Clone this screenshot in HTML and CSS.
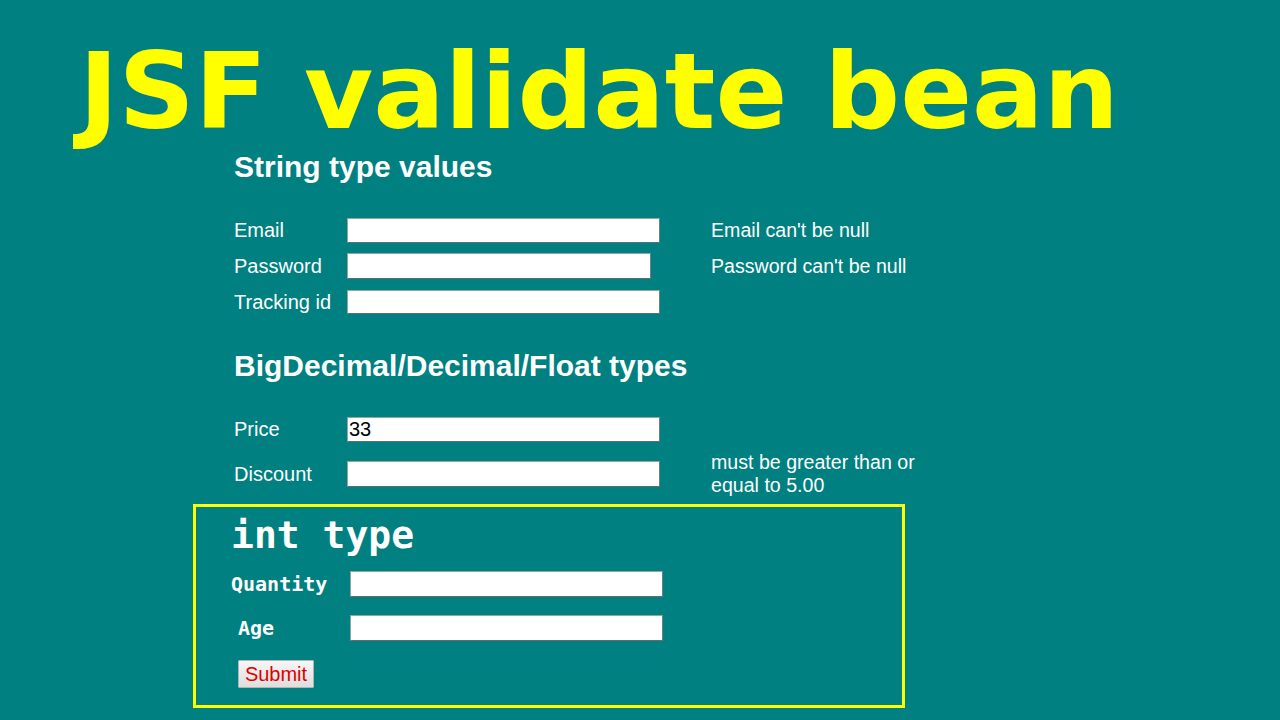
FILE: index.html
```html
<!DOCTYPE html>
<html>
<head>
<meta charset="utf-8">
<link rel="stylesheet" href="styles.css">
</head>
<body>
<h1 class="title">JSF validate bean</h1>
<div class="content">
  <h2 class="heading heading-first">String type values</h2>
  <div class="row">
    <span class="label">Email</span>
    <input class="field" type="text">
    <span class="error">Email can't be null</span>
  </div>
  <div class="row">
    <span class="label">Password</span>
    <input class="field field-short" type="password">
    <span class="error error-shift">Password can't be null</span>
  </div>
  <div class="row row-clip">
    <span class="label">Tracking id</span>
    <input class="field field-thin" type="text">
  </div>

  <h2 class="heading heading-second">BigDecimal/Decimal/Float types</h2>
  <div class="row">
    <span class="label">Price</span>
    <input class="field" type="text" value="33">
  </div>
  <div class="row row-discount">
    <span class="label">Discount</span>
    <input class="field field-tall" type="text">
    <span class="error error-wrap">must be greater than or equal to 5.00</span>
  </div>
</div>

<div class="intbox">
  <h2 class="mono-heading">int type</h2>
  <div class="row">
    <span class="mlabel">Quantity</span>
    <input class="field field-tall" type="text">
  </div>
  <div class="row row-age">
    <span class="mlabel mlabel-indent">Age</span>
    <input class="field field-tall" type="text">
  </div>
  <button class="submit" type="button">Submit</button>
</div>
</body>
</html>
```

FILE: styles.css
```css
html, body {
  margin: 0;
  padding: 0;
}
body {
  background: #008080;
  color: #ffffff;
  font-family: "Liberation Sans", Arial, sans-serif;
  width: 1280px;
  height: 720px;
  overflow: hidden;
}
.title {
  margin: 0;
  padding: 38px 0 0 79px;
  font-family: "DejaVu Sans", Verdana, sans-serif;
  font-weight: bold;
  font-size: 106px;
  line-height: 108px;
  height: 108px;
  color: #ffff00;
  white-space: nowrap;
}
.content {
  padding-left: 234px;
}
.heading {
  margin: 0;
  font-size: 30px;
  line-height: 36px;
  font-weight: bold;
  white-space: nowrap;
}
.heading-first {
  margin-top: 3px;
  margin-bottom: 27px;
}
.heading-second {
  margin-top: 30px;
  margin-bottom: 27px;
}
.row {
  display: flex;
  align-items: center;
  min-height: 36px;
}
.row-clip {
  height: 28px;
  min-height: 28px;
  align-items: flex-start;
  padding-top: 6px;
  overflow: hidden;
  margin-bottom: 2px;
}
.row-clip .label {
  line-height: 24px;
}
.row-discount {
  margin-top: 4px;
}
.label {
  width: 113px;
  flex: none;
  font-size: 20px;
  line-height: 24px;
  white-space: nowrap;
}
.field {
  box-sizing: border-box;
  width: 313px;
  height: 25px;
  margin: 0;
  padding: 0 1px;
  border: 1px solid #8fa7a7;
  border-bottom-color: #5f6f6f;
  border-right-color: #6f7f7f;
  background: #ffffff;
  font-family: "Liberation Sans", Arial, sans-serif;
  font-size: 20px;
  color: #000000;
  outline: none;
  flex: none;
}
.field-short {
  width: 304px;
  height: 26px;
}
.field-thin {
  height: 24px;
}
.field-tall {
  height: 26px;
}
.error {
  margin-left: 51px;
  font-size: 19.6px;
  line-height: 23px;
  white-space: nowrap;
}
.error-shift {
  margin-left: 60px;
}
.error-wrap {
  white-space: normal;
  width: 230px;
}
.intbox {
  box-sizing: border-box;
  margin: 7px 0 0 193px;
  width: 712px;
  height: 204px;
  border: 3px solid #ffff00;
  padding: 6px 0 0 35px;
}
.mono-heading {
  margin: 0 0 9px 0;
  font-family: "DejaVu Sans Mono", monospace;
  font-weight: bold;
  font-size: 38px;
  line-height: 44px;
  white-space: nowrap;
}
.mlabel {
  width: 119px;
  flex: none;
  font-family: "DejaVu Sans Mono", monospace;
  font-weight: bold;
  font-size: 20px;
  line-height: 24px;
  white-space: nowrap;
}
.mlabel-indent {
  box-sizing: border-box;
  padding-left: 7px;
}
.row-age {
  margin-top: 8px;
}
.submit {
  display: block;
  margin: 14px 0 0 7px;
  box-sizing: border-box;
  width: 76px;
  height: 28px;
  padding: 0;
  border: 1px solid #b4b4b4;
  border-radius: 1px;
  background: linear-gradient(#f6f6f6, #dedede);
  color: #dd0000;
  font-family: "Liberation Sans", Arial, sans-serif;
  font-size: 20px;
  line-height: 26px;
}
```
